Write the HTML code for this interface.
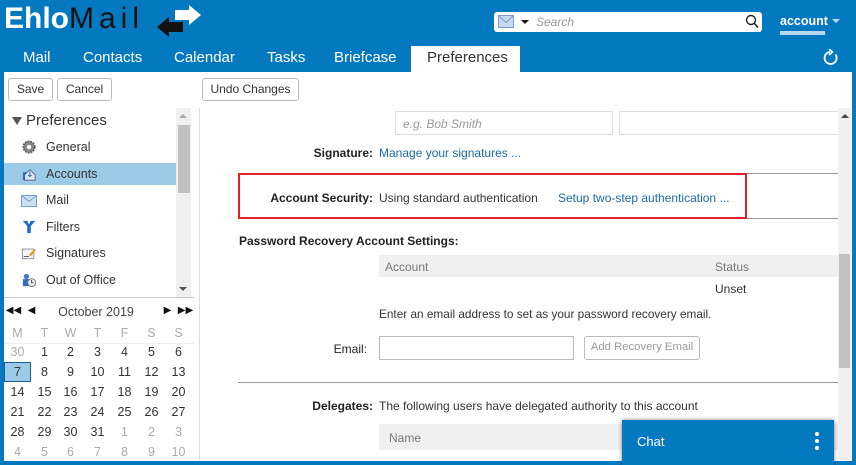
<!DOCTYPE html>
<html><head><meta charset="utf-8"><style>
*{box-sizing:border-box;margin:0;padding:0}
body{width:856px;height:465px;overflow:hidden;background:#0579c0;font-family:"Liberation Sans",sans-serif;font-size:12px;color:#333;position:relative}
.a{position:absolute}
.btn{position:absolute;border:1px solid #bbb;border-radius:3px;background:#fff;font-size:12px;color:#333;text-align:center;line-height:21px;height:23px}
.tab{position:absolute;top:49px;color:#fff;font-size:15px}
.it{position:absolute;left:46px;font-size:12.5px;color:#333}
.ic{position:absolute;left:21px;width:16px;height:14px}
.cal span{position:absolute;width:27px;text-align:center;font-size:12.5px;color:#333}
.g{color:#aaa!important}
.lbl{position:absolute;text-align:right;font-size:12px;color:#222;font-weight:bold}
a{color:#1a6aa8;text-decoration:none}
</style></head><body>
<!-- logo -->
<div class="a" style="left:4px;top:2px;font-size:30px;font-weight:bold;color:#fff;letter-spacing:0px">Ehlo<span style="font-weight:normal;color:#111;letter-spacing:5px">Mail</span></div>
<svg class="a" style="left:155px;top:4px" width="48" height="36"><path d="M20 6h14V1l12 10-12 10v-5H20z" fill="#fff"/><path d="M28 18H14v-5L2 23l12 10v-5h14z" fill="#111"/></svg>
<!-- search -->
<div class="a" style="left:494px;top:12px;width:268px;height:20px;background:#fff;border-radius:3px"></div>
<svg class="a" style="left:498px;top:15px" width="16" height="13"><rect x=".5" y=".5" width="15" height="12" fill="#c8daf0" stroke="#7a9cc8"/><path d="M.5 .5l7.5 7 7.5-7" fill="none" stroke="#7a9cc8"/></svg>
<div class="a" style="left:521px;top:20px;border:4px solid transparent;border-top:4px solid #111;border-bottom:0"></div>
<div class="a" style="left:536px;top:15px;font-style:italic;color:#999;font-size:12px">Search</div>
<svg class="a" style="left:745px;top:14px" width="14" height="15"><circle cx="6" cy="6" r="4.5" fill="none" stroke="#222" stroke-width="1.4"/><path d="M9 9l4 4.5" stroke="#222" stroke-width="1.6"/></svg>
<div class="a" style="left:780px;top:14px;color:#fff;font-weight:bold;font-size:12.5px">account</div>
<div class="a" style="left:780px;top:31px;width:45px;height:4px;background:#b8d6ee"></div>
<div class="a" style="left:832px;top:19px;border:4px solid transparent;border-top:4px solid #b8d6ee;border-bottom:0"></div>
<!-- tabs -->
<div class="tab" style="left:23px">Mail</div>
<div class="tab" style="left:83px">Contacts</div>
<div class="tab" style="left:174px">Calendar</div>
<div class="tab" style="left:267px">Tasks</div>
<div class="tab" style="left:334px">Briefcase</div>
<div class="a" style="left:411px;top:46px;width:109px;height:28px;background:#fff"></div>
<div class="tab" style="left:427px;color:#333">Preferences</div>
<svg class="a" style="left:822px;top:49px" width="18" height="18"><path d="M13.5 5.5A6 6 0 1 1 8 3" fill="none" stroke="#fff" stroke-width="1.8"/><path d="M7 0l3.5 3L7 6" fill="none" stroke="#fff" stroke-width="1.6"/></svg>
<!-- main white -->
<div class="a" style="left:4px;top:72px;width:848px;height:389px;background:#fff"></div>
<div class="btn" style="left:8px;top:78px;width:45px">Save</div>
<div class="btn" style="left:57px;top:78px;width:55px">Cancel</div>
<div class="btn" style="left:202px;top:78px;width:97px">Undo Changes</div>
<!-- left tree -->
<div class="a" style="left:12px;top:117px;border:5px solid transparent;border-top:8px solid #555;border-bottom:0"></div>
<div class="a" style="left:26px;top:112px;font-size:15px;color:#333">Preferences</div>
<div class="a" style="left:4px;top:163px;width:172px;height:22px;background:#9ccbe8"></div>
<svg class="ic" style="top:140px" viewBox="0 0 16 16"><circle cx="8" cy="8" r="6.5" fill="#888" stroke="#555" stroke-dasharray="2 1.2" stroke-width="2"/><circle cx="8" cy="8" r="2.5" fill="#fff"/></svg>
<div class="it" style="top:140px">General</div>
<svg class="ic" style="top:167px" viewBox="0 0 16 16"><rect x="1" y="6" width="5" height="9" fill="#2a6fc0"/><path d="M3 9l6-6 6 6v6H3z" fill="#dde8f4" stroke="#557"/><path d="M9 5v6M7 9l2 2 2-2" stroke="#1a5fb0" fill="none"/></svg>
<div class="it" style="top:167px">Accounts</div>
<svg class="ic" style="top:194px" viewBox="0 0 16 14"><rect x=".5" y="1.5" width="15" height="11" fill="#cddff2" stroke="#7b9cc8"/><path d="M.5 1.5l7.5 6 7.5-6" fill="none" stroke="#7b9cc8"/></svg>
<div class="it" style="top:193px">Mail</div>
<svg class="ic" style="top:220px" viewBox="0 0 16 16"><path d="M1 1h5L8 5l2-4h5l-5 6v8H6V7z" fill="#1a6ccc"/></svg>
<div class="it" style="top:220px">Filters</div>
<svg class="ic" style="top:246px" viewBox="0 0 16 16"><rect x=".5" y="3.5" width="13" height="11" fill="#f4f6fa" stroke="#889"/><path d="M9 11l6-7" stroke="#e0a020" stroke-width="2.5"/><path d="M2 12h6" stroke="#555"/></svg>
<div class="it" style="top:246px">Signatures</div>
<svg class="ic" style="top:273px" viewBox="0 0 16 16"><circle cx="5" cy="4" r="3" fill="#3a7ac8"/><rect x="1" y="7" width="8" height="8" fill="#2a6fc0"/><circle cx="11" cy="11" r="4.5" fill="#eee" stroke="#666"/><path d="M11 8v3h2" stroke="#333" fill="none"/></svg>
<div class="it" style="top:273px">Out of Office</div>
<div class="a" style="left:176px;top:108px;width:15px;height:189px;background:#f0f0f0"></div>
<div class="a" style="left:179px;top:114px;border:4px solid transparent;border-bottom:4px solid #aaa;border-top:0"></div>
<div class="a" style="left:178px;top:125px;width:12px;height:68px;background:#c1c1c1"></div>
<div class="a" style="left:179px;top:287px;border:4px solid transparent;border-top:4px solid #555;border-bottom:0"></div>
<div class="a" style="left:199px;top:108px;width:1px;height:353px;background:#ddd"></div>
<div class="a" style="left:4px;top:297px;width:190px;height:1px;background:#ccc"></div>
<!-- calendar -->
<div class="a cal" style="left:4px;top:0">
<span style="left:-4px;top:305px;font-size:10px;color:#111">◀◀</span>
<span style="left:14px;top:305px;font-size:10px;color:#111">◀</span>
<span style="left:52px;top:305px;width:80px;color:#444">October 2019</span>
<span style="left:150px;top:305px;font-size:10px;color:#111">▶</span>
<span style="left:168px;top:305px;font-size:10px;color:#111">▶▶</span>
</div>
<div class="a" style="left:4px;top:343px;width:190px;height:1px;background:#eee"></div>
<div class="a" style="left:4px;top:362px;width:27px;height:20px;background:#9ccbe8;border:1px solid #1d5f95"></div>
<div class="cal" id="cal"></div>
<script>
var c=document.getElementById('cal'),h='',xs=[4,31,57,84,111,138,165];
var dn=['M','T','W','T','F','S','S'];
for(var i=0;i<7;i++)h+='<span class="g" style="left:'+xs[i]+'px;top:326px">'+dn[i]+'</span>';
var d=[[30,1,2,3,4,5,6],[7,8,9,10,11,12,13],[14,15,16,17,18,19,20],[21,22,23,24,25,26,27],[28,29,30,31,1,2,3],[4,5,6,7,8,9,10]];
for(var r=0;r<6;r++)for(i=0;i<7;i++){var g=(r==0&&i==0)||(r==4&&i>3)||r==5;h+='<span class="'+(g?'g':'')+'" style="left:'+xs[i]+'px;top:'+(345+r*20)+'px">'+d[r][i]+'</span>';}
c.innerHTML=h;
</script>
<!-- right content -->
<div class="a" style="left:395px;top:111px;width:218px;height:24px;border:1px solid #ddd"></div>
<div class="a" style="left:403px;top:117px;font-style:italic;color:#999">e.g. Bob Smith</div>
<div class="a" style="left:619px;top:111px;width:220px;height:24px;border:1px solid #ddd"></div>
<div class="lbl" style="left:200px;width:173px;top:146px">Signature:</div>
<div class="a" style="left:379px;top:146px"><a>Manage your signatures ...</a></div>
<div class="a" style="left:238px;top:173px;width:600px;height:1px;background:#999"></div>
<div class="a" style="left:238px;top:218px;width:600px;height:1px;background:#999"></div>
<div class="a" style="left:238px;top:173px;width:509px;height:46px;border:2px solid #e8202a"></div>
<div class="lbl" style="left:200px;width:173px;top:191px">Account Security:</div>
<div class="a" style="left:379px;top:191px">Using standard authentication</div>
<div class="a" style="left:558px;top:191px"><a>Setup two-step authentication ...</a></div>
<div class="a" style="left:239px;top:234px;font-weight:bold;color:#222">Password Recovery Account Settings:</div>
<div class="a" style="left:379px;top:255px;width:459px;height:22px;background:#f0f0f0"></div>
<div class="a" style="left:385px;top:260px;color:#777">Account</div>
<div class="a" style="left:715px;top:260px;color:#777">Status</div>
<div class="a" style="left:715px;top:282px">Unset</div>
<div class="a" style="left:379px;top:307px;font-size:11.8px">Enter an email address to set as your password recovery email.</div>
<div class="lbl" style="left:200px;width:167px;top:342px;font-weight:normal">Email:</div>
<div class="a" style="left:379px;top:336px;width:195px;height:24px;border:1px solid #bbb"></div>
<div class="btn" style="left:584px;top:336px;width:116px;height:24px;color:#999;font-size:11.3px">Add Recovery Email</div>
<div class="a" style="left:238px;top:382px;width:600px;height:1px;background:#999"></div>
<div class="lbl" style="left:200px;width:173px;top:399px">Delegates:</div>
<div class="a" style="left:379px;top:399px">The following users have delegated authority to this account</div>
<div class="a" style="left:379px;top:424px;width:459px;height:26px;background:#f0f0f0"></div>
<div class="a" style="left:389px;top:431px;color:#777">Name</div>
<!-- main scrollbar -->
<div class="a" style="left:838px;top:108px;width:13px;height:353px;background:#f0f0f0"></div>
<div class="a" style="left:841px;top:114px;border:4px solid transparent;border-bottom:4px solid #444;border-top:0"></div>
<div class="a" style="left:839px;top:254px;width:11px;height:114px;background:#c1c1c1"></div>
<!-- chat -->
<div class="a" style="left:622px;top:420px;width:212px;height:45px;background:#0579c0;box-shadow:0 0 4px rgba(0,0,0,.5)"></div>
<div class="a" style="left:637px;top:434px;color:#fff;font-size:13px">Chat</div>
<svg class="a" style="left:813px;top:431px" width="8" height="20"><circle cx="4" cy="3" r="2" fill="#fff"/><circle cx="4" cy="10" r="2" fill="#fff"/><circle cx="4" cy="17" r="2" fill="#fff"/></svg>
</body></html>
